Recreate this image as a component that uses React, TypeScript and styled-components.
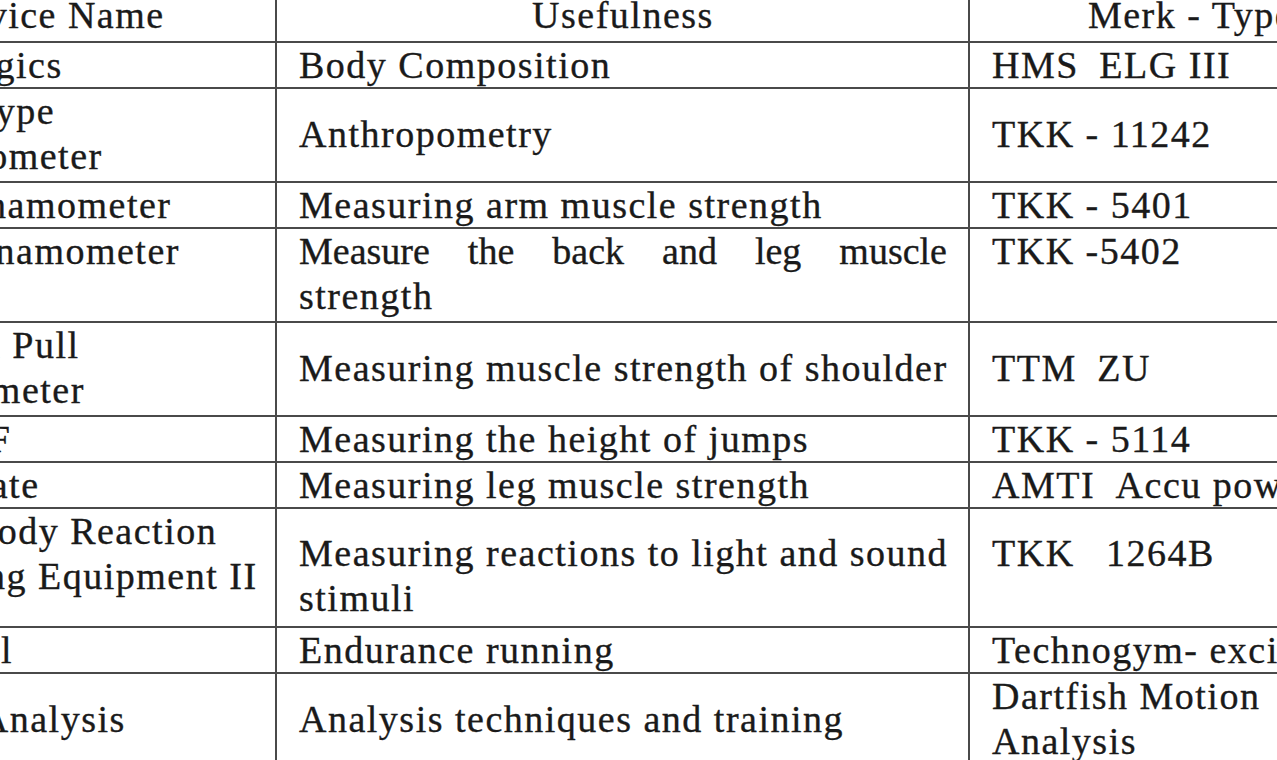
import styled, { createGlobalStyle } from "styled-components";

const GlobalStyle = createGlobalStyle`
  html, body {
    margin: 0;
    padding: 0;
    background: #ffffff;
  }
`;

type Line = { text: string; justify?: boolean };
type CellData = {
  lines: Line[];
  valign?: "top" | "middle";
  pad?: number;
};
type RowData = { height: number; cells: CellData[] };

const l = (text: string, justify = false): Line => ({ text, justify });

const HEADER = ["Device Name", "Usefulness", "Merk - Type"];

//ROWS OF THE TABLE (heights in px, lines exactly as set in the source)
const ROWS: RowData[] = [
  {
    height: 44,
    cells: [
      { lines: [l("Body Logics")] },
      { lines: [l("Body Composition")] },
      { lines: [l("HMS\u2002ELG III")] },
    ],
  },
  {
    height: 92,
    cells: [
      { lines: [l("Martin Type"), l("Anthropometer")] },
      { lines: [l("Anthropometry")], valign: "middle" },
      { lines: [l("TKK - 11242")], valign: "middle" },
    ],
  },
  {
    height: 44,
    cells: [
      { lines: [l("Grip Dynamometer")] },
      { lines: [l("Measuring arm muscle strength")] },
      { lines: [l("TKK - 5401")] },
    ],
  },
  {
    height: 92,
    cells: [
      { lines: [l("Back Dynamometer")] },
      { lines: [l("Measure the back and leg muscle", true), l("strength")] },
      { lines: [l("TKK -5402")] },
    ],
  },
  {
    height: 92,
    cells: [
      { lines: [l("Push and Pull"), l("Dynamometer")] },
      { lines: [l("Measuring muscle strength of shoulder")], valign: "middle" },
      { lines: [l("TTM\u2002ZU")], valign: "middle" },
    ],
  },
  {
    height: 44,
    cells: [
      { lines: [l("Jump\u2002DF")] },
      { lines: [l("Measuring the height of jumps")] },
      { lines: [l("TKK - 5114")] },
    ],
  },
  {
    height: 44,
    cells: [
      { lines: [l("Force Plate")] },
      { lines: [l("Measuring leg muscle strength")] },
      { lines: [l("AMTI\u2002Accu power")] },
    ],
  },
  {
    height: 117,
    cells: [
      { lines: [l("Whole Body Reaction"), l("Measuring Equipment II")] },
      {
        lines: [l("Measuring reactions to light and sound"), l("stimuli")],
        pad: 22,
      },
      { lines: [l("TKK\u2002 1264B")], pad: 22 },
    ],
  },
  {
    height: 44,
    cells: [
      { lines: [l("Treadmill")] },
      { lines: [l("Endurance running")] },
      { lines: [l("Technogym- excite")] },
    ],
  },
  {
    height: 92,
    cells: [
      { lines: [l("Motion Analysis")], valign: "middle" },
      { lines: [l("Analysis techniques and training")], valign: "middle" },
      { lines: [l("Dartfish Motion"), l("Analysis")] },
    ],
  },
];

const Frame = styled.div`
  width: 1277px;
  height: 760px;
  overflow: hidden;
  background: #ffffff;
`;

const Table: any = styled.div`
  display: grid;
  grid-template-columns: 428px 691px 440px;
  grid-template-rows: ${(props: any) => props.$rows};
  gap: 2px;
  width: max-content;
  margin: -3px 0 0 -155px;
  background: #4a4a4a;
  border: 2px solid #4a4a4a;
  border-top: none;
`;

const Cell: any = styled.div`
  display: flex;
  flex-direction: column;
  justify-content: ${(props: any) =>
    props.$valign == "middle" ? "center" : "flex-start"};
  padding: ${(props: any) => props.$pad || 0}px 21px
    ${(props: any) => (props.$head ? 7 : 2)}px
    ${(props: any) => (props.$first ? 4 : 22)}px;
  background: #ffffff;
  color: #1a1a1a;
  font-family: "Liberation Serif", "Times New Roman", serif;
  font-size: 38px;
  letter-spacing: 1.5px;
  line-height: 45px;
  -webkit-text-stroke: 0.35px #1a1a1a;
  text-align: ${(props: any) => (props.$head ? "center" : "left")};
  white-space: nowrap;
  overflow: hidden;
`;

const TextLine: any = styled.span`
  display: block;
  text-align-last: ${(props: any) => (props.$justify ? "justify" : "auto")};
  letter-spacing: ${(props: any) => (props.$justify ? "0" : "inherit")};
  white-space: ${(props: any) => (props.$justify ? "normal" : "nowrap")};
`;

function TableCell({ cell, first }: { cell: CellData; first: boolean }) {
  return (
    <Cell $valign={cell.valign || "top"} $pad={cell.pad} $first={first}>
      {cell.lines.map((line, i) => (
        <TextLine key={i} $justify={line.justify}>
          {line.text}
        </TextLine>
      ))}
    </Cell>
  );
}

export default function App() {
  const rows = ["44px", ...ROWS.map((r) => r.height + "px")].join(" ");
  return (
    <Frame>
      <GlobalStyle />
      <Table $rows={rows}>
        {HEADER.map((h, c) => (
          <Cell key={h} $head $first={c == 0} $valign="middle">
            {h}
          </Cell>
        ))}
        {ROWS.map((row, r) =>
          row.cells.map((cell, c) => (
            <TableCell key={r + "-" + c} cell={cell} first={c == 0} />
          ))
        )}
      </Table>
    </Frame>
  );
}
